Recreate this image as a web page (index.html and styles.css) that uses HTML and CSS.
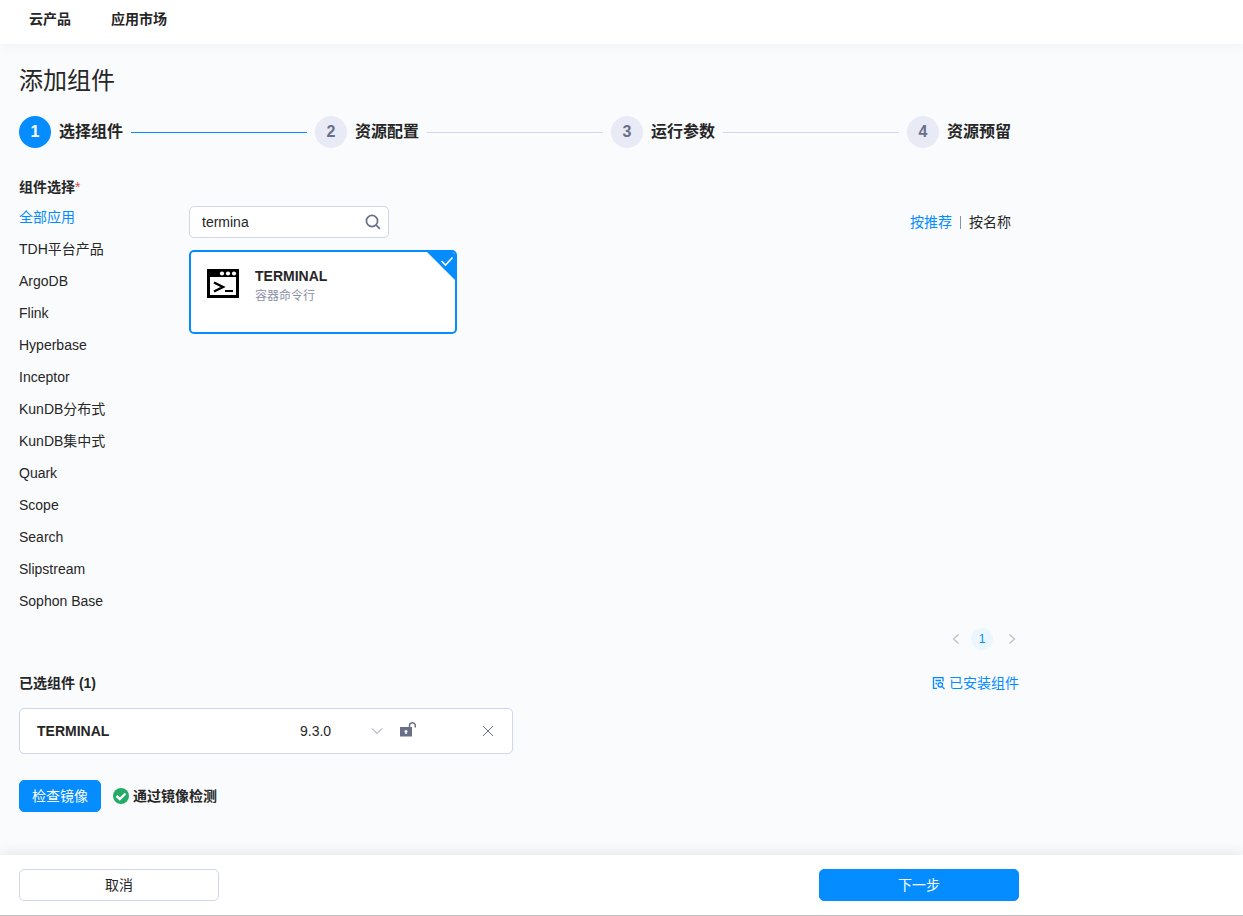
FILE: index.html
```html
<!DOCTYPE html>
<html lang="zh-CN">
<head>
    <meta charset="UTF-8">
    <title>添加组件</title>
    <link rel="stylesheet" href="styles.css">
</head>
<body>
    <header class="topbar">
        <nav class="topnav">
            <a href="#">云产品</a>
            <a href="#">应用市场</a>
        </nav>
    </header>

    <main class="content">
        <h1>添加组件</h1>

        <ol class="steps">
            <li class="step active"><span class="num">1</span><span class="name">选择组件</span></li>
            <li class="step"><span class="num">2</span><span class="name">资源配置</span></li>
            <li class="step"><span class="num">3</span><span class="name">运行参数</span></li>
            <li class="step"><span class="num">4</span><span class="name">资源预留</span></li>
        </ol>

        <h2 class="label"><label for="search">组件选择<span class="required">*</span></label></h2>

        <div class="picker">
            <nav class="categories">
                <a href="#" class="current">全部应用</a>
                <a href="#">TDH平台产品</a>
                <a href="#">ArgoDB</a>
                <a href="#">Flink</a>
                <a href="#">Hyperbase</a>
                <a href="#">Inceptor</a>
                <a href="#">KunDB分布式</a>
                <a href="#">KunDB集中式</a>
                <a href="#">Quark</a>
                <a href="#">Scope</a>
                <a href="#">Search</a>
                <a href="#">Slipstream</a>
                <a href="#">Sophon Base</a>
            </nav>

            <section class="apps">
                <div class="toolbar">
                    <div class="search">
                        <input type="text" id="search" value="termina">
                        <svg width="16" height="16" viewBox="0 0 16 16" fill="none" stroke="#686f89" stroke-width="1.7">
                            <circle cx="7" cy="7" r="5.600"/>
                            <path d="M11.200 11.200L14.800 14.800"/>
                        </svg>
                    </div>
                    <div class="sort">
                        <a href="#" class="current">按推荐</a>
                        <span class="divider"></span>
                        <a href="#">按名称</a>
                    </div>
                </div>

                <div class="card selected">
                    <svg class="logo" width="32" height="32" viewBox="0 0 32 32">
                        <rect y="1" width="32" height="29" fill="#000"/>
                        <rect x="3" y="9" width="26" height="18" fill="#fff"/>
                        <g fill="#fff">
                            <circle cx="15" cy="5.500" r="2.100"/>
                            <circle cx="21" cy="5.500" r="2.100"/>
                            <circle cx="27" cy="5.500" r="2.100"/>
                        </g>
                        <path d="M7 14.500L16 19L7 23.500" fill="none" stroke="#000" stroke-width="2.400"/>
                        <path d="M18 23H26" stroke="#000" stroke-width="2"/>
                    </svg>
                    <div class="card-text">
                        <h3>TERMINAL</h3>
                        <p>容器命令行</p>
                    </div>
                    <svg class="corner" width="28" height="28" viewBox="0 0 28 28">
                        <path d="M0 0H28V28Z" fill="#058cff"/>
                        <path d="M14.500 9L18.500 13L25.500 5.500" fill="none" stroke="#fff" stroke-width="1.600"/>
                    </svg>
                </div>
            </section>
        </div>

        <div class="pager">
            <button type="button" aria-label="上一页">
                <svg width="14" height="14" viewBox="0 0 14 14"><path d="M9.500 2.500L4.500 7L9.500 11.500"/></svg>
            </button>
            <button type="button" class="page">1</button>
            <button type="button" aria-label="下一页">
                <svg width="14" height="14" viewBox="0 0 14 14"><path d="M4.500 2.500L9.500 7L4.500 11.500"/></svg>
            </button>
        </div>

        <div class="selected-head">
            <h2>已选组件 (1)</h2>
            <a href="#" class="installed">
                <svg width="14" height="14" viewBox="0 0 14 14" fill="none" stroke="#058cff" stroke-width="1.300">
                    <path d="M12 5.500V1.600H2.500V12.400H6"/>
                    <path d="M4.500 4.500H10M4.500 7.500H6"/>
                    <circle cx="9.300" cy="8.800" r="2.200"/>
                    <path d="M10.900 10.400L13.500 13"/>
                </svg>
                已安装组件
            </a>
        </div>

        <div class="item">
            <strong>TERMINAL</strong>
            <div class="version">
                <select aria-label="版本">
                    <option>9.3.0</option>
                </select>
                <svg width="12" height="12" viewBox="0 0 12 12" fill="none" stroke="#8b90a7"><path d="M1 3.500L6 8.500L11 3.500"/></svg>
            </div>
            <button type="button" class="lock" aria-label="解锁">
                <svg width="16" height="16" viewBox="0 0 16 16">
                    <path d="M0 6H12V15.500H0Z" fill="#686f89"/>
                    <path d="M9.500 6V4A3 3 0 0 1 15.300 4V6.500" fill="none" stroke="#686f89" stroke-width="1.500"/>
                    <path d="M6 9V13M4.500 10.500H7.500" stroke="#fff" stroke-width="1.500"/>
                </svg>
            </button>
            <button type="button" class="remove" aria-label="删除">
                <svg width="12" height="12" viewBox="0 0 12 12" stroke="#686f89"><path d="M1 1L11 11M11 1L1 11"/></svg>
            </button>
        </div>

        <div class="check">
            <button type="button" class="btn primary">检查镜像</button>
            <span class="result">
                <svg width="16" height="16" viewBox="0 0 16 16">
                    <circle cx="8" cy="8" r="8" fill="#25ab68"/>
                    <path d="M3.500 8L6.800 11L12.500 5.500" fill="none" stroke="#fff" stroke-width="2.400"/>
                </svg>
                通过镜像检测
            </span>
        </div>
    </main>

    <footer class="footer">
        <div class="actions">
            <button type="button" class="btn wide">取消</button>
            <button type="button" class="btn primary wide">下一步</button>
        </div>
    </footer>
</body>
</html>
```
FILE: styles.css
```css
* {
    box-sizing: border-box;
}

body {
    display: flex;
    flex-direction: column;
    min-height: 100vh;
    margin: 0;
    font-family: "Liberation Sans", "Noto Sans CJK SC", sans-serif;
    font-size: 14px;
    line-height: 22px;
    color: #262626;
    background: #fafbfd;
}

h1, h2, h3, p, ol {
    margin: 0;
    padding: 0;
}

h2, h3 {
    font-size: 14px;
}

a {
    color: inherit;
    text-decoration: none;
}

button, input, select {
    font: inherit;
    color: inherit;
}

button {
    padding: 0;
    border: none;
    background: none;
    cursor: pointer;
}

svg {
    display: block;
    flex: none;
}

.topbar {
    height: 44px;
    padding: 8px 29px;
    background: #fff;
    box-shadow: 0 2px 12px rgba(0,0,0,0.04);
}

.topnav {
    display: flex;
    gap: 40px;
    font-weight: bold;
}

.content {
    flex: 1;
    width: 100%;
    max-width: 1038px;
    padding: 20px 19px 43px;
}

h1 {
    font-size: 24px;
    font-weight: normal;
    line-height: 34px;
}

/* Steps */
.steps {
    display: flex;
    margin-top: 18px;
    padding-right: 8px;
    list-style: none;
}

.step {
    display: flex;
    flex: 1;
    align-items: center;
    gap: 8px;
    font-size: 16px;
    font-weight: bold;
    line-height: 24px;
}

.step:last-child {
    flex: none;
}

.step:not(:last-child)::after {
    content: "";
    flex: 1;
    height: 1px;
    margin-right: 8px;
    background: #d0d7ed;
}

.num {
    width: 32px;
    height: 32px;
    border-radius: 50%;
    line-height: 32px;
    text-align: center;
    color: #686f89;
    background: #e8eaf6;
}

.active .num {
    color: #fff;
    background: #058cff;
}

.step.active::after {
    background: #058cff;
}

.label {
    margin-top: 28px;
}

.required {
    font-weight: normal;
    color: #e5453b;
}

.current {
    color: #058cff;
}

/* Component picker */
.picker {
    display: grid;
    grid-template-columns: 170px 1fr;
    margin-top: 3px;
}

.categories a {
    display: block;
    line-height: 32px;
}

.apps {
    padding-top: 5px;
}

.toolbar {
    display: flex;
    align-items: center;
    justify-content: space-between;
    padding-right: 8px;
}

.search {
    position: relative;
    width: 200px;
}

.search input {
    display: block;
    width: 100%;
    height: 32px;
    padding: 0 32px 0 12px;
    border: 1px solid #d0d7ed;
    border-radius: 5px;
    background: #fff;
}

.search svg {
    position: absolute;
    top: 8px;
    right: 8px;
}

.sort {
    display: flex;
    align-items: center;
    gap: 8px;
}

.divider {
    width: 1px;
    height: 13px;
    background: #8b90a7;
}

.card {
    position: relative;
    display: flex;
    gap: 16px;
    width: 268px;
    height: 84px;
    margin-top: 12px;
    padding: 16px;
    border: 2px solid #d0d7ed;
    border-radius: 5px;
    background: #fff;
    overflow: hidden;
}

.card.selected {
    border-color: #058cff;
}

.card h3 {
    line-height: 16px;
}

.card p {
    font-size: 12px;
    line-height: 24px;
    color: #8b90a7;
}

.corner {
    position: absolute;
    top: 0;
    right: 0;
}

/* Pagination */
.pager {
    display: flex;
    align-items: center;
    justify-content: flex-end;
    margin-top: 11px;
}

.pager path {
    fill: none;
    stroke: #b9bdcc;
    stroke-width: 1.2;
}

.page {
    width: 22px;
    height: 22px;
    margin: 0 12px 0 8px;
    border-radius: 50%;
    font-size: 12px;
    color: #058cff;
    background: #ebf6ff;
}

/* Selected components */
.selected-head {
    display: flex;
    justify-content: space-between;
    margin-top: 22px;
}

.installed {
    display: flex;
    align-items: center;
    gap: 4px;
    color: #058cff;
}

.item {
    display: flex;
    align-items: center;
    width: 494px;
    height: 46px;
    margin-top: 14px;
    padding: 0 17px;
    border: 1px solid #d0d7ed;
    border-radius: 5px;
    background: #fff;
}

.item strong {
    flex: 1;
}

.version {
    position: relative;
    width: 83px;
}

.version select {
    display: block;
    width: 100%;
    height: 32px;
    padding: 0;
    border: none;
    appearance: none;
    background: none;
}

.version svg {
    position: absolute;
    top: 10px;
    right: 0;
}

.lock {
    margin: 0 66px 4px 17px;
}

.remove {
    margin-right: 1px;
}

.check {
    display: flex;
    align-items: center;
    gap: 12px;
    margin-top: 26px;
}

.btn {
    height: 32px;
    padding: 0 12px;
    border: 1px solid #d0d7ed;
    border-radius: 5px;
    background: #fff;
}

.btn.primary {
    border-color: #058cff;
    color: #fff;
    background: #058cff;
}

.btn.wide {
    width: 200px;
}

.result {
    display: flex;
    align-items: center;
    gap: 4px;
    font-weight: bold;
}

.footer {
    padding: 14px 19px;
    border-bottom: 1px solid #bfbfbf;
    background: #fff;
    box-shadow: 0 -2px 12px rgba(0,0,0,0.09);
}

.actions {
    display: flex;
    justify-content: space-between;
    max-width: 1000px;
}
```
